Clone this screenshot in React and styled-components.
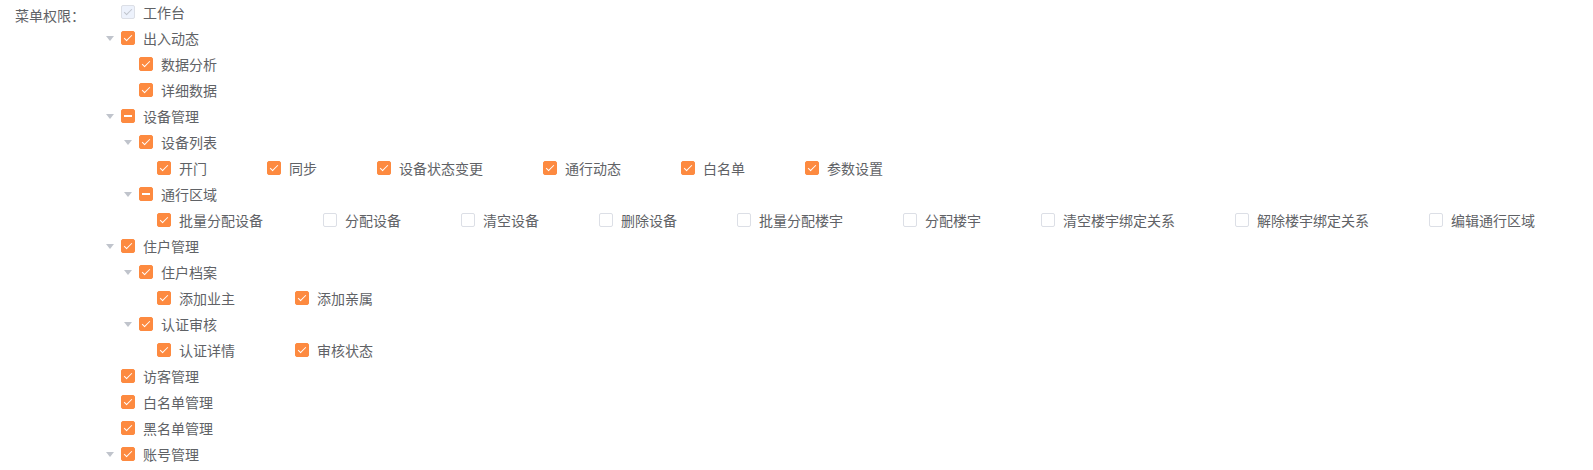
import React from "react";
import styled, { createGlobalStyle, css } from "styled-components";

const orange = "#fd8a40";

const GlobalStyle = createGlobalStyle`
  html, body {
    margin: 0;
    padding: 0;
    background: #fff;
    overflow: hidden;
  }
  body {
    font-family: "Noto Sans CJK SC", "Microsoft YaHei", sans-serif;
    font-size: 14px;
    color: #606266;
  }
`;

const menu = [
  { label: "工作台", state: "disabled" },
  {
    label: "出入动态",
    state: "checked",
    children: [
      { label: "数据分析", state: "checked" },
      { label: "详细数据", state: "checked" },
    ],
  },
  {
    label: "设备管理",
    state: "indeterminate",
    children: [
      {
        label: "设备列表",
        state: "checked",
        inline: [
          { label: "开门", state: "checked" },
          { label: "同步", state: "checked" },
          { label: "设备状态变更", state: "checked" },
          { label: "通行动态", state: "checked" },
          { label: "白名单", state: "checked" },
          { label: "参数设置", state: "checked" },
        ],
      },
      {
        label: "通行区域",
        state: "indeterminate",
        inline: [
          { label: "批量分配设备", state: "checked" },
          { label: "分配设备", state: "unchecked" },
          { label: "清空设备", state: "unchecked" },
          { label: "删除设备", state: "unchecked" },
          { label: "批量分配楼宇", state: "unchecked" },
          { label: "分配楼宇", state: "unchecked" },
          { label: "清空楼宇绑定关系", state: "unchecked" },
          { label: "解除楼宇绑定关系", state: "unchecked" },
          { label: "编辑通行区域", state: "unchecked" },
        ],
      },
    ],
  },
  {
    label: "住户管理",
    state: "checked",
    children: [
      {
        label: "住户档案",
        state: "checked",
        inline: [
          { label: "添加业主", state: "checked" },
          { label: "添加亲属", state: "checked" },
        ],
      },
      {
        label: "认证审核",
        state: "checked",
        inline: [
          { label: "认证详情", state: "checked" },
          { label: "审核状态", state: "checked" },
        ],
      },
    ],
  },
  { label: "访客管理", state: "checked" },
  { label: "白名单管理", state: "checked" },
  { label: "黑名单管理", state: "checked" },
  { label: "账号管理", state: "checked", collapsed: true },
];

const Page = styled.div`
  display: flex;
  align-items: flex-start;
  margin-top: -1px;
`;

const FormLabel = styled.div`
  width: 85px;
  padding-left: 15px;
  padding-top: 6px;
  line-height: 20px;
  color: #606266;
  flex-shrink: 0;
`;

const Tree = styled.div`
  display: flex;
  flex-direction: column;
`;

const NodeRow = styled.div`
  display: flex;
  align-items: center;
  height: 26px;
  padding-left: ${(p) => p.$level * 18}px;
`;

const CaretSlot = styled.span`
  width: 19px;
  height: 26px;
  display: flex;
  align-items: center;
  justify-content: center;
  flex-shrink: 0;
`;

const Caret = styled.span`
  width: 0;
  height: 0;
  border-left: 4px solid transparent;
  border-right: 4px solid transparent;
  border-top: 5px solid #c0c4cc;
`;

const Box = styled.span`
  position: relative;
  box-sizing: border-box;
  width: 14px;
  height: 14px;
  border-radius: 2px;
  border: 1px solid #dcdfe6;
  background: #fff;
  margin: 0 8px 0 2px;
  flex-shrink: 0;

  ${(p) =>
    (p.$state === "checked" || p.$state === "disabled") &&
    css`
      &::after {
        content: "";
        box-sizing: content-box;
        position: absolute;
        left: 4px;
        top: 1px;
        width: 3px;
        height: 7px;
        border: 1px solid ${p.$state === "disabled" ? "#c0c4cc" : "#fff"};
        border-left: 0;
        border-top: 0;
        transform: rotate(45deg);
      }
    `}

  ${(p) =>
    (p.$state === "checked" || p.$state === "indeterminate") &&
    css`
      background: ${orange};
      border-color: ${orange};
    `}

  ${(p) =>
    p.$state === "disabled" &&
    css`
      background: #edf2fc;
      border-color: #dcdfe6;
    `}

  ${(p) =>
    p.$state === "indeterminate" &&
    css`
      &::before {
        content: "";
        position: absolute;
        left: 2px;
        right: 2px;
        top: 5px;
        height: 2px;
        background: #fff;
      }
    `}
`;

const Label = styled.span`
  line-height: 26px;
  white-space: nowrap;
  color: #606266;
`;

const InlineGroup = styled.div`
  display: flex;
  align-items: center;
  height: 26px;
  padding-left: ${(p) => p.$level * 18 + 19}px;
`;

const InlineItem = styled.div`
  display: flex;
  align-items: center;
  margin-right: 58px;
`;

const Node = ({ node, level }) => {
  const hasChildren = !!(node.children || node.inline || node.collapsed);
  return (
    <>
      <NodeRow $level={level}>
        <CaretSlot>{hasChildren && <Caret />}</CaretSlot>
        <Box $state={node.state} />
        <Label>{node.label}</Label>
      </NodeRow>
      {node.children &&
        node.children.map((child) => (
          <Node key={child.label} node={child} level={level + 1} />
        ))}
      {node.inline && (
        <InlineGroup $level={level + 1}>
          {node.inline.map((item) => (
            <InlineItem key={item.label}>
              <Box $state={item.state} />
              <Label>{item.label}</Label>
            </InlineItem>
          ))}
        </InlineGroup>
      )}
    </>
  );
};

const App = () => {
  return (
    <>
      <GlobalStyle />
      <Page>
        <FormLabel>菜单权限：</FormLabel>
        <Tree>
          {menu.map((node) => (
            <Node key={node.label} node={node} level={0} />
          ))}
        </Tree>
      </Page>
    </>
  );
};

export default App;
